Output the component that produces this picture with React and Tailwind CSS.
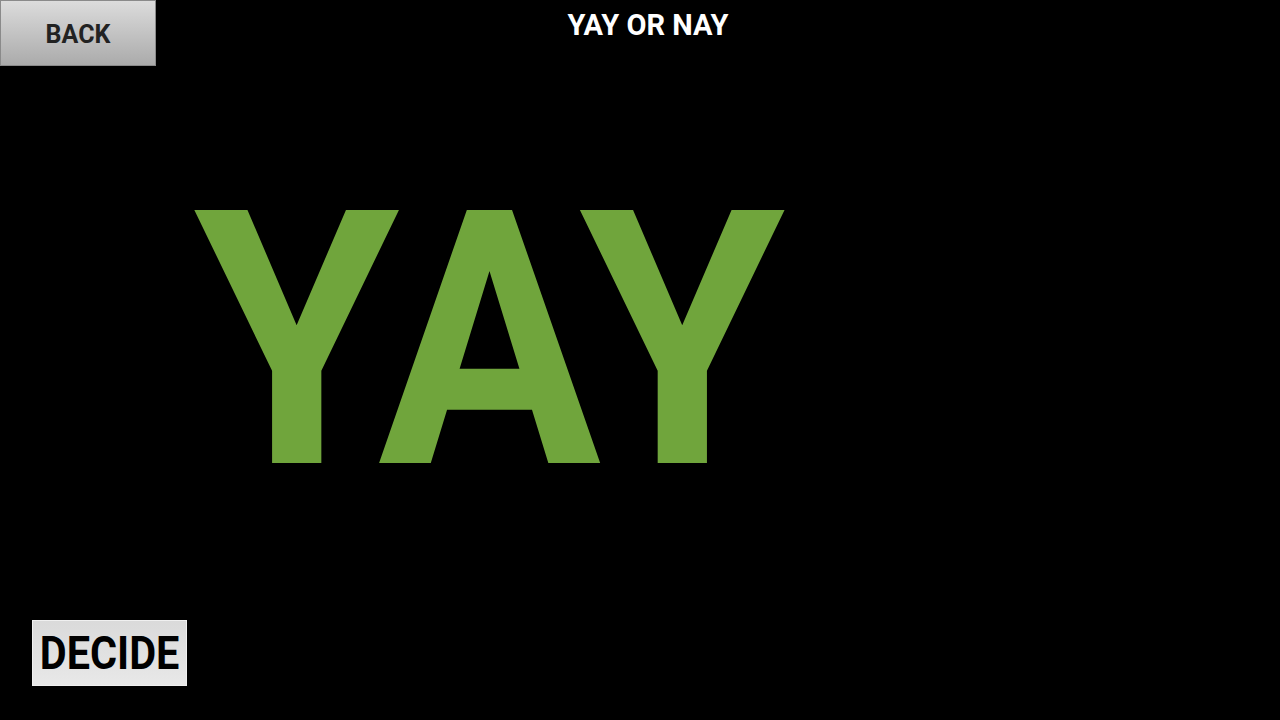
export default function App() {
  return (
    <div className="w-[1280px] h-[720px] bg-black relative overflow-hidden" style={{ fontFamily: "Roboto, 'Liberation Sans', sans-serif" }}>
      <div className="flex h-[66px]">
        <button className="w-[156px] h-[66px] border border-[#8a8a8a] bg-gradient-to-b from-[#dcdcdc] to-[#ababab] flex items-center justify-center pt-[4px]">
          <span className="text-[25px] font-bold text-[#222222]">BACK</span>
        </button>
        <div className="flex-1 flex justify-center pr-[140px]">
          <span className="text-white font-bold text-[29px] leading-none mt-[11px]">YAY OR NAY</span>
        </div>
      </div>
      <div className="flex pl-[194px] mt-[98px]">
        <span className="text-[#70a53c] font-bold text-[356px] leading-none origin-left scale-x-[0.932]">YAY</span>
      </div>
      <div className="absolute left-[32px] top-[620px]">
        <div className="w-[155px] h-[66px] bg-gradient-to-b from-[#dadada] to-[#e8e8e8] border border-[#f0f0f0] flex items-center justify-center">
          <span className="text-black font-bold text-[46px] leading-none scale-x-[0.9]">DECIDE</span>
        </div>
      </div>
    </div>
  );
}
